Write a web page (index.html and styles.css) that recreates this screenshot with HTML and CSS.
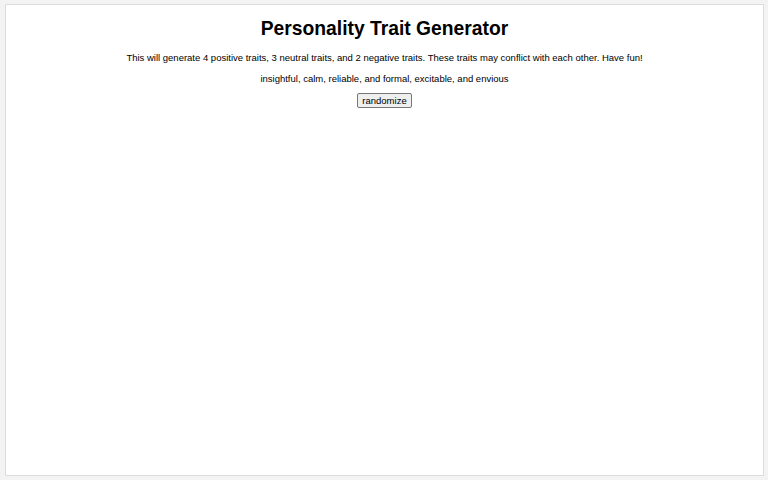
FILE: index.html
```html
<!DOCTYPE html>
<html lang="en">

<head>
    <meta charset="UTF-8">
    <meta name="viewport" content="width=device-width, initial-scale=1.0">
    <title>Personality Trait Generator</title>
    <link rel="stylesheet" href="styles.css">
</head>

<body>
    <div class="panel">
        <h1>Personality Trait Generator</h1>
        <p class="intro">This will generate 4 positive traits, 3 neutral traits, and 2 negative traits. These traits may conflict with each other. Have fun!</p>
        <p class="traits" id="traits">insightful, calm, reliable, and formal, excitable, and envious</p>
        <button class="randomize">randomize</button>
    </div>
</body>

</html>
```

FILE: styles.css
```css
* {
    padding: 0;
    margin: 0;
    box-sizing: border-box;
}

html,
body {
    height: 100%;
}

body {
    background-color: #f3f3f3;
    padding: 4px 4px 4px 5px;
    font-family: "Liberation Sans", Arial, sans-serif;
    color: #000;
}

.panel {
    height: 472px;
    background-color: #fff;
    border: 1px solid #dcdcdc;
    text-align: center;
    padding-top: 12px;
}

.panel h1 {
    font-size: 19.3px;
    line-height: 23px;
    font-weight: bold;
    margin-bottom: 12px;
}

.intro,
.traits {
    font-size: 9.5px;
    line-height: 12px;
}

.intro {
    margin-bottom: 9px;
}

.traits {
    margin-bottom: 5px;
}

.randomize {
    font-family: "Liberation Sans", Arial, sans-serif;
    font-size: 9.5px;
    line-height: 11px;
    padding: 1px 4px;
    background-color: #efefef;
    border: 1px solid #767676;
    border-radius: 2px;
}
```
